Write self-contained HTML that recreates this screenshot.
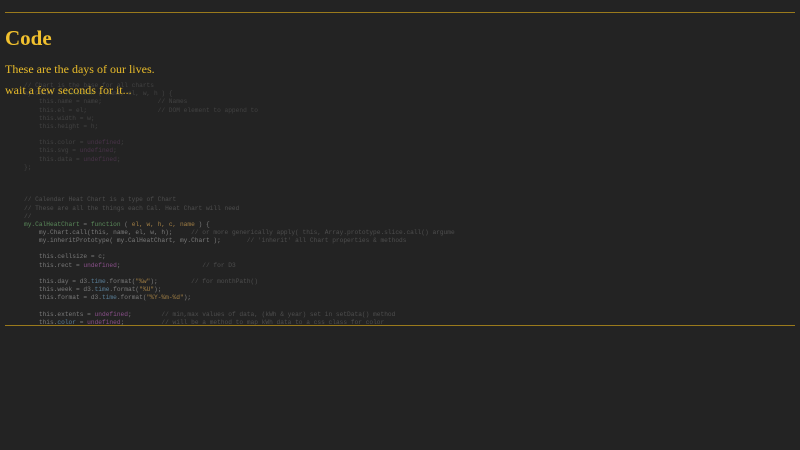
<!DOCTYPE html>
<html><head><style>
html,body{margin:0;padding:0;background:#232323;width:800px;height:450px;overflow:hidden;position:relative}
.hr{position:absolute;left:5px;right:5px;height:1px;background:#9a7a1c}
h1{position:absolute;left:5px;top:26px;margin:0;font:bold 21px "Liberation Serif",serif;color:#f2c12e}
.p{position:absolute;left:5px;font:12px "Liberation Serif",serif;color:#e8bb2a}
pre{position:absolute;left:24px;top:74px;margin:0;font:6.2px/8.15px "Liberation Mono",monospace;color:#7a7a7a;white-space:pre}
.c{color:#4e4e4e}.k{color:#5a7f98}.u{color:#8a4f8a}.s{color:#a07e44}.f{color:#5a8a5a}
.dim{opacity:.35}
</style></head><body>
<div class="hr" style="top:12px"></div>
<h1>Code</h1>
<div class="p" style="top:62px">These are the days of our lives.</div>
<div class="p" style="top:83px">wait a few seconds for it...</div>
<pre><span class="dim">
// Chart is the base for all charts                    
my.Chart = <span class="f">function</span> ( name, el, w, h ) {
    this.name = name;               // Names
    this.el = el;                   // DOM element to append to
    this.width = w;
    this.height = h;

    this.color = <span class="u">undefined</span>;
    this.svg = <span class="u">undefined</span>;
    this.data = <span class="u">undefined</span>;
};</span>



<span class="c">// Calendar Heat Chart is a type of Chart
// These are all the things each Cal. Heat Chart will need
//</span>
<span class="f">my.CalHeatChart</span> = <span class="f">function</span> ( <span class="s">el, w, h, c, name</span> ) {
    my.Chart.call(this, name, el, w, h);     <span class="c">// or more generically apply( this, Array.prototype.slice.call() argume</span>
    my.inheritPrototype( my.CalHeatChart, my.Chart );       <span class="c">// 'inherit' all Chart properties & methods</span>

    this.cellsize = c;
    this.rect = <span class="u">undefined</span>;                      <span class="c">// for D3</span>

    this.day = d3.<span class="k">time</span>.format(<span class="s">"%w"</span>);         <span class="c">// for monthPath()</span>
    this.week = d3.<span class="k">time</span>.format(<span class="s">"%U"</span>);
    this.format = d3.<span class="k">time</span>.format(<span class="s">"%Y-%m-%d"</span>);

    this.extents = <span class="u">undefined</span>;        <span class="c">// min,max values of data, (kWh & year) set in setData() method</span>
    this.<span class="k">color</span> = <span class="u">undefined</span>;          <span class="c">// will be a method to map kWh data to a css class for color</span>
</pre>
<div class="hr" style="top:325px"></div>
</body></html>
